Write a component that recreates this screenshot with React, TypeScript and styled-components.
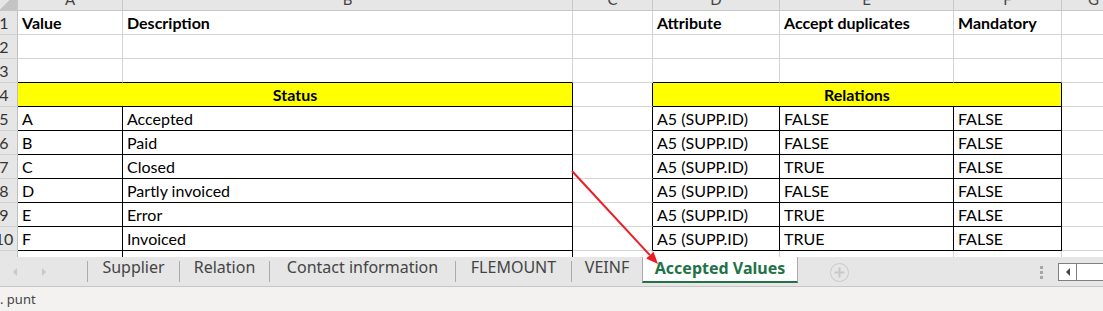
import React from "react";
import styled, { createGlobalStyle } from "styled-components";

const GlobalStyle = createGlobalStyle`
  html, body { margin: 0; padding: 0; background: #fff; }
  body { width: 1103px; height: 311px; overflow: hidden; }
`;

const FONT_CELL = `"Lato", "Liberation Sans", sans-serif`;
const FONT_UI = `"Noto Sans", "Open Sans", sans-serif`;

const COLS = [27, 105, 450, 80, 127, 174, 108, 64];
const LETTERS = ["A", "B", "C", "D", "E", "F", "G"];
const GRID_LINE = "#d4d4d4";
const BLACK = "#000";

const Page = styled.div`
  position: relative;
  width: 1103px;
  height: 311px;
  display: flex;
  flex-direction: column;
  overflow: hidden;
  background: #fff;
`;

const SheetViewport = styled.div`
  flex: none;
  height: 257px;
  overflow: hidden;
`;

const Grid = styled.div`
  display: grid;
  grid-template-columns: ${COLS.map((c) => `${c}px`).join(" ")};
  grid-template-rows: 21px repeat(11, 24px);
  margin: -10px 0 0 -9px;
  width: max-content;
`;

const Corner = styled.div`
  box-sizing: border-box;
  background: linear-gradient(135deg, #e6e6e6 62%, #c4c4c4 62%);
  border-right: 1px solid #c6c6c6;
  border-bottom: 1px solid #c6c6c6;
`;

const ColHead = styled.div`
  box-sizing: border-box;
  background: #e6e6e6;
  border-right: 1px solid #c6c6c6;
  border-bottom: 1px solid #c6c6c6;
  font: 400 15px/18px ${FONT_CELL};
  color: #444;
  text-align: center;
  overflow: hidden;
`;

const RowHead = styled.div`
  box-sizing: border-box;
  background: #e6e6e6;
  border-right: 1px solid #c0c0c0;
  border-bottom: 1px solid #d0d0d0;
  font: 400 16px/20px ${FONT_CELL};
  padding-top: 2px;
  color: #333;
  text-align: center;
  overflow: hidden;
`;

const Cell = styled.div<{
  $right: string;
  $bottom: string;
  $fill?: boolean;
  $bold?: boolean;
  $center?: boolean;
  $span?: number;
}>`
  grid-column: span ${(p) => p.$span ?? 1};
  box-sizing: border-box;
  border-right: 1px solid ${(p) => p.$right};
  border-bottom: 1px solid ${(p) => p.$bottom};
  background: ${(p) => (p.$fill ? "#ffff00" : "#fff")};
  font: ${(p) => (p.$bold ? 700 : 400)} 16px/20px ${FONT_CELL};
  color: #000;
  padding: 2px 4px 0;
  text-align: ${(p) => (p.$center ? "center" : "left")};
  white-space: nowrap;
  overflow: hidden;
`;

const TabBar = styled.div`
  flex: none;
  height: 30px;
  box-sizing: border-box;
  background: #e6e6e6;
  border-bottom: 1px solid #c6c6c6;
  display: flex;
  align-items: flex-start;
  overflow: hidden;
`;

const NavArea = styled.div`
  flex: none;
  width: 87px;
  height: 29px;
  box-sizing: border-box;
  padding-left: 13px;
  display: flex;
  align-items: center;
  gap: 25px;
`;

const NavArrow = styled.span<{ $dir: "left" | "right" }>`
  width: 0;
  height: 0;
  border-top: 4px solid transparent;
  border-bottom: 4px solid transparent;
  ${(p) =>
    p.$dir === "left"
      ? "border-right: 4px solid #c8c8c8;"
      : "border-left: 4px solid #c8c8c8;"}
`;

const TabSep = styled.span`
  flex: none;
  width: 1px;
  height: 21px;
  margin-top: 4px;
  background: #ababab;
`;

const Tab = styled.div<{ $w: number }>`
  flex: none;
  width: ${(p) => p.$w}px;
  text-align: center;
  font: 400 16px/20px ${FONT_UI};
  color: #444;
  white-space: nowrap;
`;

const ActiveTab = styled.div`
  flex: none;
  width: 156px;
  height: 26px;
  box-sizing: border-box;
  background: #fff;
  border-left: 1px solid #ababab;
  border-right: 1px solid #ababab;
  border-bottom: 2px solid #217346;
  padding-top: 1px;
  text-align: center;
  font: 700 16px/20px ${FONT_UI};
  color: #217346;
  white-space: nowrap;
`;

const AddButton = styled.svg`
  flex: none;
  margin: 6px 0 0 32px;
`;

const Spacer = styled.div`
  flex: 1;
`;

const MoreDots = styled.div`
  flex: none;
  margin: 9px 15px 0 0;
  display: flex;
  flex-direction: column;
  gap: 2px;
`;

const Dot = styled.span`
  width: 3px;
  height: 3px;
  background: #a6a6a6;
`;

const ScrollBox = styled.div`
  flex: none;
  width: 45px;
  height: 18px;
  margin-top: 6px;
  box-sizing: border-box;
  border: 1px solid #7f7f7f;
  border-right: none;
  background: #fff;
  display: flex;
`;

const ScrollLeft = styled.div`
  flex: none;
  width: 18px;
  box-sizing: border-box;
  border-right: 1px solid #7f7f7f;
  display: flex;
  align-items: center;
  justify-content: center;
  &::before {
    content: "";
    width: 0;
    height: 0;
    border-top: 4px solid transparent;
    border-bottom: 4px solid transparent;
    border-right: 4px solid #444;
  }
`;

const StatusBar = styled.div`
  flex: 1;
  background: #f3f2f1;
  font: 400 13px/24px ${FONT_UI};
  color: #444;
  white-space: nowrap;
`;

const Overlay = styled.svg`
  position: absolute;
  left: 0;
  top: 0;
  pointer-events: none;
`;

type CellDef = { text?: string; bold?: boolean; fill?: boolean; center?: boolean; span?: number };

const statusRows: [string, string][] = [
  ["A", "Accepted"],
  ["B", "Paid"],
  ["C", "Closed"],
  ["D", "Partly invoiced"],
  ["E", "Error"],
  ["F", "Invoiced"],
];
const dupValues = ["FALSE", "FALSE", "TRUE", "FALSE", "TRUE", "TRUE"];

function rowCells(r: number): Record<number, CellDef> {
  if (r === 1)
    return {
      1: { text: "Value", bold: true },
      2: { text: "Description", bold: true },
      4: { text: "Attribute", bold: true },
      5: { text: "Accept duplicates", bold: true },
      6: { text: "Mandatory", bold: true },
    };
  if (r === 4)
    return {
      1: { text: "Status", bold: true, fill: true, center: true, span: 2 },
      4: { text: "Relations", bold: true, fill: true, center: true, span: 3 },
    };
  if (r >= 5 && r <= 10) {
    const i = r - 5;
    return {
      1: { text: statusRows[i][0] },
      2: { text: statusRows[i][1] },
      4: { text: "A5 (SUPP.ID)" },
      5: { text: dupValues[i] },
      6: { text: "FALSE" },
    };
  }
  return {};
}

const bordered = (r: number, c: number) =>
  (r >= 4 && r <= 11 && c >= 1 && c <= 2) || (r >= 4 && r <= 10 && c >= 4 && c <= 6);

const ROWS = Array.from({ length: 11 }, (_, i) => i + 1);

export default function App() {
  const ax1 = 572, ay1 = 171, tx = 658, ty = 264;
  const dx = tx - ax1, dy = ty - ay1;
  const len = Math.hypot(dx, dy);
  const ux = dx / len, uy = dy / len;
  const hl = 12, hw = 5;
  const bx = tx - ux * hl, by = ty - uy * hl;
  const head = `${tx},${ty} ${bx - uy * hw},${by + ux * hw} ${bx + uy * hw},${by - ux * hw}`;

  return (
    <Page>
      <GlobalStyle />
      <SheetViewport>
        <Grid>
          <Corner />
          {LETTERS.map((l) => (
            <ColHead key={l}>{l}</ColHead>
          ))}
          {ROWS.map((r) => {
            const defs = rowCells(r);
            const out: React.ReactNode[] = [<RowHead key={`h${r}`}>{r}</RowHead>];
            let c = 1;
            while (c <= 7) {
              const d = defs[c] ?? {};
              const span = d.span ?? 1;
              const last = c + span - 1;
              const right = bordered(r, last) || bordered(r, last + 1) ? BLACK : GRID_LINE;
              const bottom = bordered(r, c) || bordered(r + 1, c) ? BLACK : GRID_LINE;
              out.push(
                <Cell
                  key={`${r}-${c}`}
                  $right={right}
                  $bottom={bottom}
                  $fill={d.fill}
                  $bold={d.bold}
                  $center={d.center}
                  $span={span}
                >
                  {d.text}
                </Cell>
              );
              c += span;
            }
            return out;
          })}
        </Grid>
      </SheetViewport>
      <TabBar>
        <NavArea>
          <NavArrow $dir="left" />
          <NavArrow $dir="right" />
        </NavArea>
        <TabSep />
        <Tab $w={91}>Supplier</Tab>
        <TabSep />
        <Tab $w={89}>Relation</Tab>
        <TabSep />
        <Tab $w={185}>Contact information</Tab>
        <TabSep />
        <Tab $w={115}>FLEMOUNT</Tab>
        <TabSep />
        <Tab $w={70}>VEINF</Tab>
        <ActiveTab>Accepted Values</ActiveTab>
        <AddButton width="19" height="19" viewBox="0 0 19 19">
          <circle cx="9.5" cy="9.5" r="9" fill="none" stroke="#c8c8c8" strokeWidth="1" />
          <path d="M9.5 4.5v10M4.5 9.5h10" stroke="#c8c8c8" strokeWidth="2" />
        </AddButton>
        <Spacer />
        <MoreDots>
          <Dot />
          <Dot />
          <Dot />
        </MoreDots>
        <ScrollBox>
          <ScrollLeft />
        </ScrollBox>
      </TabBar>
      <StatusBar>. punt</StatusBar>
      <Overlay width="1103" height="311" viewBox="0 0 1103 311">
        <line x1={ax1} y1={ay1} x2={bx} y2={by} stroke="#ec1c24" strokeWidth="2" />
        <polygon points={head} fill="#ec1c24" />
      </Overlay>
    </Page>
  );
}
